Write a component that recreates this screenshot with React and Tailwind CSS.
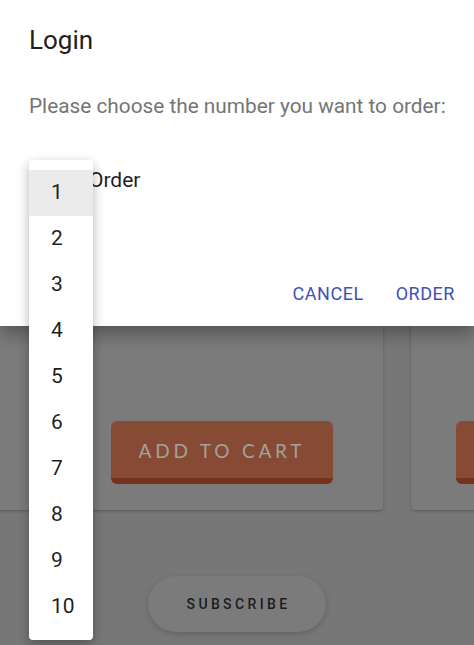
import React from "react";

const items = [1, 2, 3, 4, 5, 6, 7, 8, 9, 10];

const Card = () => (
  <div className="w-[317px] h-[310px] shrink-0 bg-[#7b7b7b] rounded-[4px] shadow-[0_1px_3px_rgba(0,0,0,0.25)] flex flex-col justify-end items-start pl-[45px] pb-[26px]">
    <div className="w-[222px] h-[63px] rounded-[6px] bg-[#874b35] border-b-[6px] border-[#78301f] flex items-center justify-center">
      <span
        className="text-[19px] tracking-[0.2em] text-[#a5a09d] pt-[4px]"
        style={{ fontFamily: "Lato, 'Open Sans', sans-serif" }}
      >
        ADD TO CART
      </span>
    </div>
  </div>
);

export default function App() {
  return (
    <div
      className="relative w-[474px] h-[645px] overflow-hidden bg-[#777777]"
      style={{ fontFamily: "Roboto, 'Noto Sans', sans-serif" }}
    >
      {/* page behind the backdrop */}
      <div className="pt-[200px]">
        <div className="flex gap-[28px] -ml-[279px]">
          <Card />
          <Card />
          <Card />
        </div>
        <div className="flex justify-center mt-[66px]">
          <div className="w-[178px] h-[56px] rounded-full bg-[#7b7b7b] shadow-[0_2px_6px_rgba(0,0,0,0.18)] flex items-center justify-center">
            <span className="text-[14px] font-medium tracking-[0.24em] text-[#1c1c1c] pl-[3px]">
              SUBSCRIBE
            </span>
          </div>
        </div>
      </div>

      {/* dialog */}
      <div className="absolute top-0 left-0 right-0 h-[326px] bg-white shadow-[0_8px_16px_rgba(0,0,0,0.3)] flex flex-col">
        <div className="pl-[29px] pt-[24px] text-[26px] leading-[32px] text-[#1f1f1f]">
          Login
        </div>
        <div className="pl-[29px] mt-[36px] text-[20.8px] leading-[28px] text-[#757575]">
          Please choose the number you want to order:
        </div>
        <div className="pl-[89px] mt-[46px] text-[21px] leading-[28px] text-[#1f1f1f]">
          Order
        </div>
        <div className="mt-auto flex justify-end gap-[12px] pr-[9px] pb-[10px]">
          <button className="h-[46px] px-[10px] text-[18px] tracking-[0.03em] text-[#3f51b5]">
            CANCEL
          </button>
          <button className="h-[46px] px-[10px] text-[18px] tracking-[0.03em] text-[#3f51b5]">
            ORDER
          </button>
        </div>
      </div>

      {/* select menu */}
      <div className="absolute left-[29px] top-[160px] w-[64px] bg-white rounded-[4px] py-[10px] shadow-[0_4px_12px_rgba(0,0,0,0.3)]">
        {items.map((n) => (
          <div
            key={n}
            className={
              "h-[46px] flex items-center pl-[22px] text-[21px] text-[#1f1f1f] " +
              (n === 1 ? "bg-[#ebebeb]" : "")
            }
          >
            {n}
          </div>
        ))}
      </div>
    </div>
  );
}
